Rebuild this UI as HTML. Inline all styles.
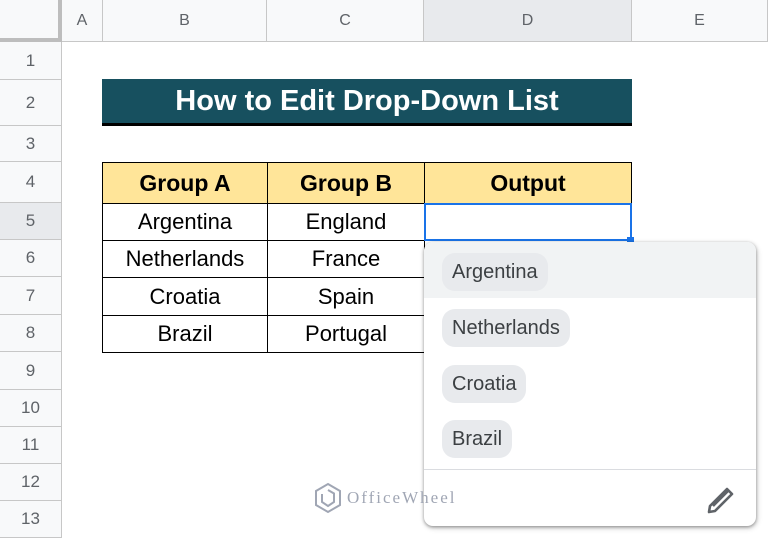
<!DOCTYPE html>
<html><head><style>
*{margin:0;padding:0;box-sizing:border-box}
body{width:768px;height:537px;overflow:hidden;background:#fff;position:relative;font-family:"Liberation Sans",Arial,sans-serif}
.a{position:absolute}
.ch{position:absolute;top:0;height:42px;background:#f8f9fa;border-right:1px solid #c7c7c7;border-bottom:1px solid #c7c7c7;color:#5f6368;font-size:16px;display:flex;align-items:center;justify-content:center}
.rh{position:absolute;left:0;width:62px;background:#f8f9fa;border-right:1px solid #c7c7c7;border-bottom:1px solid #c7c7c7;color:#5f6368;font-size:17px;display:flex;align-items:center;justify-content:center}
.c{position:absolute;display:flex;align-items:center;justify-content:center;font-size:22px;color:#000;border:1px solid #000}
.chip{position:absolute;left:442px;height:38px;background:#e8eaed;border-radius:13px;font-size:20px;color:#3c4043;padding:0 10px;display:flex;align-items:center}
</style></head><body>
<div class="ch" style="left:0;width:62px;border-right:4px solid #bdbdbd;border-bottom:4px solid #bdbdbd;height:42px"></div>
<div class="ch" style="left:62px;width:41px">A</div>
<div class="ch" style="left:103px;width:164px">B</div>
<div class="ch" style="left:267px;width:157px">C</div>
<div class="ch" style="left:424px;width:208px;background:#e8eaed">D</div>
<div class="ch" style="left:632px;width:136px">E</div>

<div class="rh" style="top:42px;height:38px">1</div>
<div class="rh" style="top:80px;height:46px">2</div>
<div class="rh" style="top:126px;height:36px">3</div>
<div class="rh" style="top:162px;height:41px">4</div>
<div class="rh" style="top:203px;height:37px;background:#e8eaed">5</div>
<div class="rh" style="top:240px;height:37px">6</div>
<div class="rh" style="top:277px;height:38px">7</div>
<div class="rh" style="top:315px;height:37px">8</div>
<div class="rh" style="top:352px;height:38px">9</div>
<div class="rh" style="top:390px;height:37px">10</div>
<div class="rh" style="top:427px;height:37px">11</div>
<div class="rh" style="top:464px;height:37px">12</div>
<div class="rh" style="top:501px;height:37px">13</div>

<div class="a" style="left:102px;top:79px;width:530px;height:47px;background:#17505f;border-bottom:3px solid #000;color:#fff;font-weight:bold;font-size:29px;display:flex;align-items:center;justify-content:center">How to Edit Drop-Down List</div>

<div class="c" style="left:102px;top:162px;width:166px;height:42px;background:#ffe599;font-weight:bold;font-size:23px">Group A</div>
<div class="c" style="left:267px;top:162px;width:158px;height:42px;background:#ffe599;font-weight:bold;font-size:23px">Group B</div>
<div class="c" style="left:424px;top:162px;width:208px;height:42px;background:#ffe599;font-weight:bold;font-size:23px">Output</div>

<div class="c" style="left:102px;top:203px;width:166px;height:38px">Argentina</div>
<div class="c" style="left:267px;top:203px;width:158px;height:38px">England</div>
<div class="c" style="left:102px;top:240px;width:166px;height:38px">Netherlands</div>
<div class="c" style="left:267px;top:240px;width:158px;height:38px">France</div>
<div class="c" style="left:102px;top:277px;width:166px;height:39px">Croatia</div>
<div class="c" style="left:267px;top:277px;width:158px;height:39px">Spain</div>
<div class="c" style="left:102px;top:315px;width:166px;height:38px">Brazil</div>
<div class="c" style="left:267px;top:315px;width:158px;height:38px">Portugal</div>

<div class="a" style="left:424px;top:203px;width:208px;height:38px;border:2px solid #1a73e8;background:#fff"></div>
<div class="a" style="left:627px;top:237px;width:7px;height:6px;background:#1a73e8"></div>

<div class="a" style="left:424px;top:242px;width:332px;height:284px;background:#fff;border-radius:9px;box-shadow:0 1px 3px rgba(0,0,0,.35),1px 2px 6px rgba(0,0,0,.2);overflow:hidden">
<div class="a" style="left:0;top:0;width:332px;height:56px;background:#f1f3f4"></div>
<div class="a" style="left:0;top:227px;width:332px;height:1px;background:#dadce0"></div>
<svg class="a" style="left:280px;top:242px" width="32" height="32" viewBox="0 0 32 32"><path d="M5 28 L6 22 L23 5 L28 10 L11 27 Z M9 22 L24 7" fill="none" stroke="#5f6368" stroke-width="2.6" stroke-linejoin="round"/></svg>
</div>
<div class="chip" style="top:253px">Argentina</div>
<div class="chip" style="top:309px">Netherlands</div>
<div class="chip" style="top:365px">Croatia</div>
<div class="chip" style="top:420px">Brazil</div>

<svg class="a" style="left:313px;top:482px" width="30" height="32" viewBox="0 0 30 32"><path d="M15 2 L27 9 L27 23 L15 30 L3 23 L3 9 Z M15 8 L21 11.5 L21 20 L15 24 L9 20 L9 12" fill="none" stroke="#a0a6b4" stroke-width="2"/></svg>
<div class="a" style="left:347px;top:488px;font-family:'Liberation Serif',serif;font-size:17px;letter-spacing:2px;color:#a0a6b4">OfficeWheel</div>
</body></html>
